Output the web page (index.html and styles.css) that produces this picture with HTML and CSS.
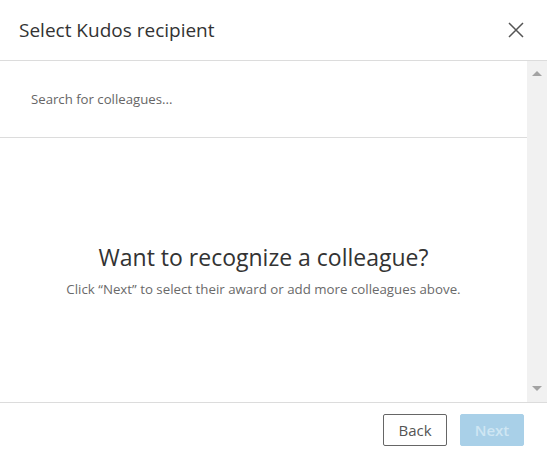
FILE: index.html
```html
<!DOCTYPE html>
<html>
<head>
<meta charset="utf-8">
<link rel="stylesheet" href="styles.css">
</head>
<body>
<div class="dialog">
  <header class="header">
    <h1 class="title">Select Kudos recipient</h1>
    <button class="close" aria-label="Close">
      <svg width="16" height="16" viewBox="0 0 16 16"><path d="M1 1L15 15M15 1L1 15" stroke="#555" stroke-width="1.5" fill="none"/></svg>
    </button>
  </header>
  <div class="main">
    <div class="content">
      <div class="search">
        <input class="search-input" type="text" placeholder="Search for colleagues...">
      </div>
      <div class="empty">
        <h2 class="empty-title">Want to recognize a colleague?</h2>
        <p class="empty-text">Click “Next” to select their award or add more colleagues above.</p>
      </div>
    </div>
    <div class="scrollbar">
      <span class="arrow up"></span>
      <span class="arrow down"></span>
    </div>
  </div>
  <footer class="footer">
    <button class="btn back">Back</button>
    <button class="btn next" disabled>Next</button>
  </footer>
</div>
</body>
</html>
```

FILE: styles.css
```css
* { box-sizing: border-box; }
html, body { margin: 0; padding: 0; background: #fff; }
body { font-family: "Open Sans", "Noto Sans", sans-serif; color: #333; }
.dialog { width: 547px; height: 457px; display: flex; flex-direction: column; }
.header { height: 61px; border-bottom: 1px solid #dcdcdc; display: flex; align-items: center; justify-content: space-between; padding: 0 23px 0 19px; flex: none; }
.title { margin: 0 0 1px; font-size: 19px; font-weight: 400; color: #333; }
.close { border: 0; background: none; padding: 0; width: 16px; height: 16px; display: flex; cursor: pointer; }
.main { flex: 1; display: flex; min-height: 0; }
.content { flex: 1; display: flex; flex-direction: column; }
.search { height: 77px; border-bottom: 1px solid #dcdcdc; display: flex; align-items: center; padding: 0 31px; flex: none; }
.search-input { border: 0; outline: none; width: 100%; padding: 0; font-family: inherit; font-size: 13.2px; color: #333; }
.search-input::placeholder { color: #666; }
.empty { flex: 1; display: flex; flex-direction: column; align-items: center; justify-content: center; padding-bottom: 2px; }
.empty-title { margin: 0; font-size: 23px; font-weight: 400; color: #333; }
.empty-text { margin: 7px 0 0; font-size: 13.3px; color: #6a6a6a; }
.scrollbar { width: 20px; background: #f1f1f1; display: flex; flex-direction: column; justify-content: space-between; align-items: center; padding: 10px 0 11px; }
.arrow { width: 0; height: 0; border-left: 5px solid transparent; border-right: 5px solid transparent; }
.arrow.up { border-bottom: 5px solid #a3a3a3; }
.arrow.down { border-top: 5px solid #a3a3a3; }
.footer { height: 55px; border-top: 1px solid #dcdcdc; display: flex; justify-content: flex-end; align-items: center; gap: 13px; padding: 0 23px 0 0; flex: none; }
.btn { width: 64px; height: 32px; font-family: inherit; font-size: 15px; border-radius: 2px; padding: 0; }
.back { background: #fff; border: 1px solid #666; color: #555; }
.next { background: #a9d0e8; border: 1px solid #a9d0e8; color: #cfe6f3; font-weight: 600; }
```
